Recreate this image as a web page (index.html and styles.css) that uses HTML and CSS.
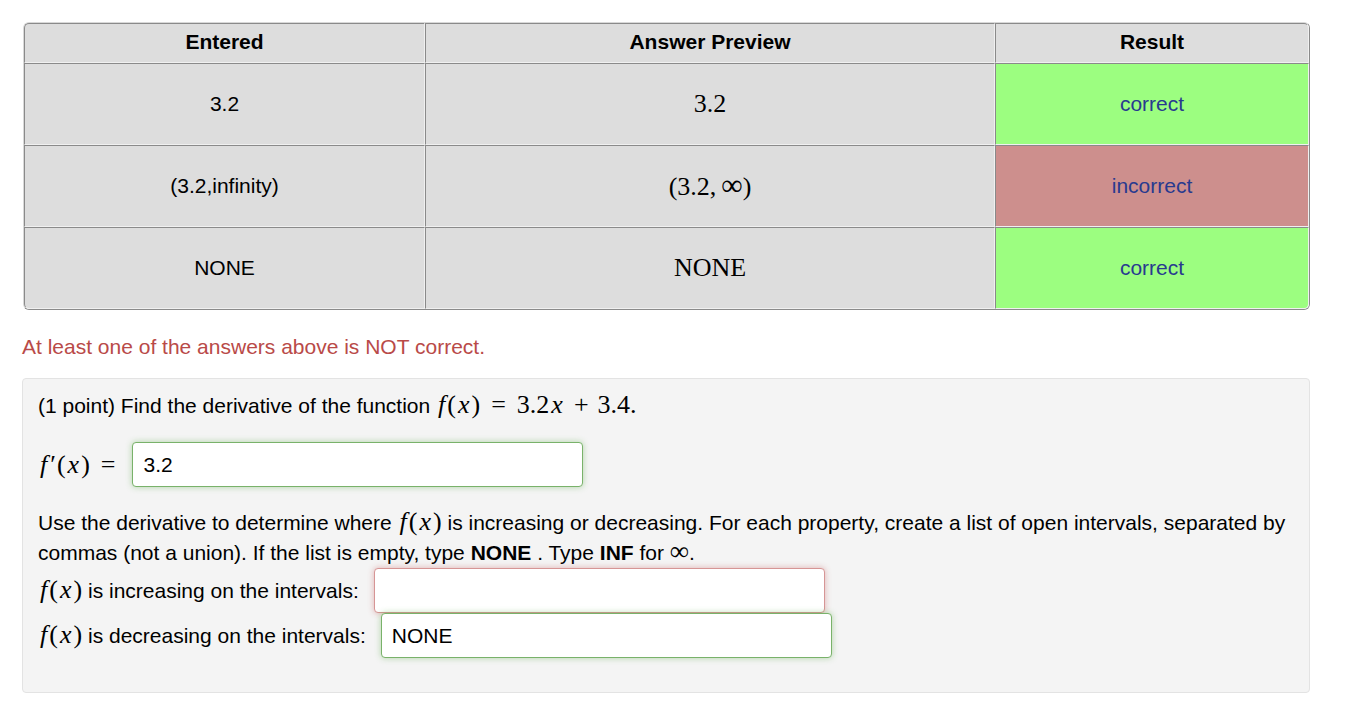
FILE: index.html
```html
<!DOCTYPE html>
<html lang="en">
<head>
    <meta charset="UTF-8">
    <meta name="viewport" content="width=device-width, initial-scale=1.0">
    <title>Problem 1</title>
    <link rel="stylesheet" href="styles.css">
</head>
<body>
    <div class="page">
        <table class="attempt-results">
            <thead>
                <tr>
                    <th class="col-entered">Entered</th>
                    <th class="col-preview">Answer Preview</th>
                    <th class="col-result">Result</th>
                </tr>
            </thead>
            <tbody>
                <tr>
                    <td>3.2</td>
                    <td class="preview">3.2</td>
                    <td class="result ok">correct</td>
                </tr>
                <tr>
                    <td>(3.2,infinity)</td>
                    <td class="preview">(3.2,<span class="thin"></span><span class="inf">&infin;</span>)</td>
                    <td class="result bad">incorrect</td>
                </tr>
                <tr>
                    <td>NONE</td>
                    <td class="preview">NONE</td>
                    <td class="result ok">correct</td>
                </tr>
            </tbody>
        </table>

        <div class="attempt-message">At least one of the answers above is NOT correct.</div>

        <div class="problem">
            <p class="intro">(1 point) Find the derivative of the function <span class="math"><i>f</i>(<i>x</i>)<span class="op">=</span>3.2<i>x</i><span class="op bin">+</span>3.4.</span></p>

            <div class="answer-row first">
                <label class="math" for="ans1"><i>f</i><span class="prime">&#8242;</span>(<i>x</i>)<span class="op">=</span></label>
                <input id="ans1" class="answer correct" type="text" value="3.2">
            </div>

            <p class="instructions">Use the derivative to determine where <span class="math"><i>f</i>(<i>x</i>)</span> is increasing or decreasing. For each property, create a list of open intervals, separated by commas (not a union). If the list is empty, type <b>NONE</b> . Type <b>INF</b> for <span class="math inf">&infin;</span>.</p>

            <div class="answer-row">
                <label for="ans2"><span class="math"><i>f</i>(<i>x</i>)</span> is increasing on the intervals:</label>
                <input id="ans2" class="answer incorrect" type="text" value="">
            </div>
            <div class="answer-row">
                <label for="ans3"><span class="math"><i>f</i>(<i>x</i>)</span> is decreasing on the intervals:</label>
                <input id="ans3" class="answer correct" type="text" value="NONE">
            </div>
        </div>
    </div>
</body>
</html>
```

FILE: styles.css
```css
* {
    box-sizing: border-box;
}

body {
    margin: 0;
    background: #fff;
    color: #000;
    font-family: "Liberation Sans", Arial, sans-serif;
    font-size: 21px;
    line-height: 30px;
}

.page {
    padding: 22px 38px 0 22px;
}

/* results table */
.attempt-results {
    width: 1287px;
    margin-left: 1px;
    border-collapse: separate;
    border-spacing: 0;
    border: 1px solid;
    border-color: #d8d8d8 #8a8a8a #8a8a8a #d8d8d8;
    border-radius: 6px;
    background: #fff;
}

.attempt-results th,
.attempt-results td {
    padding: 0 5px;
    text-align: center;
    background: #dddddd;
    border: 1px solid;
    border-color: #8a8a8a #f0f0f0 #f0f0f0 #8a8a8a;
}

.attempt-results th {
    height: 40px;
    padding-bottom: 2px;
    font-weight: bold;
}

.attempt-results td {
    height: 82px;
}

.col-entered { width: 401px; }
.col-preview { width: 570px; }

.attempt-results thead th:first-child { border-top-left-radius: 5px; }
.attempt-results thead th:last-child { border-top-right-radius: 5px; }
.attempt-results tbody tr:last-child td:first-child { border-bottom-left-radius: 5px; }
.attempt-results tbody tr:last-child td:last-child { border-bottom-right-radius: 5px; }

.attempt-results td.preview {
    font-family: "Liberation Serif", "Times New Roman", serif;
    font-size: 26px;
}

.preview .thin {
    display: inline-block;
    width: 5px;
}

.preview .inf {
    font-size: 30px;
}

.attempt-results td.result {
    color: #283a8f;
}

.attempt-results td.ok {
    background: #9cfe80;
}

.attempt-results td.bad {
    background: #cd8f8d;
}

.attempt-message {
    margin: 22px 0 16px;
    color: #b94a48;
}

/* problem well */
.problem {
    width: 1288px;
    padding: 12px 15px 34px;
    background: #f4f4f4;
    border: 1px solid #e3e3e3;
    border-radius: 4px;
}

.problem p {
    margin: 0;
}

.math {
    font-family: "Liberation Serif", "Times New Roman", serif;
    font-size: 26px;
    line-height: 1;
}

.math i {
    font-style: italic;
    padding: 0 2px;
}

.math .prime {
    padding: 0 1px;
}

.math .op {
    padding: 0 11px;
}

.math .op.bin {
    padding: 0 9px;
}

.math.inf {
    font-size: 27px;
}

.answer-row {
    display: flex;
    align-items: center;
    gap: 15px;
}

.answer-row.first {
    margin-top: 21px;
    gap: 6px;
}

.problem .instructions {
    margin-top: 21px;
}

.answer {
    width: 451px;
    height: 45px;
    padding: 0 10px;
    font-family: "Liberation Sans", Arial, sans-serif;
    font-size: 21px;
    color: #000;
    background: #fff;
    border: 1px solid #ccc;
    border-radius: 4px;
    outline: none;
}

.answer.correct {
    border-color: #79b26a;
    box-shadow: 0 0 6px rgba(90, 170, 70, 0.45);
}

.answer.incorrect {
    border-color: #d69595;
    box-shadow: 0 0 6px rgba(200, 90, 90, 0.45);
}
```
